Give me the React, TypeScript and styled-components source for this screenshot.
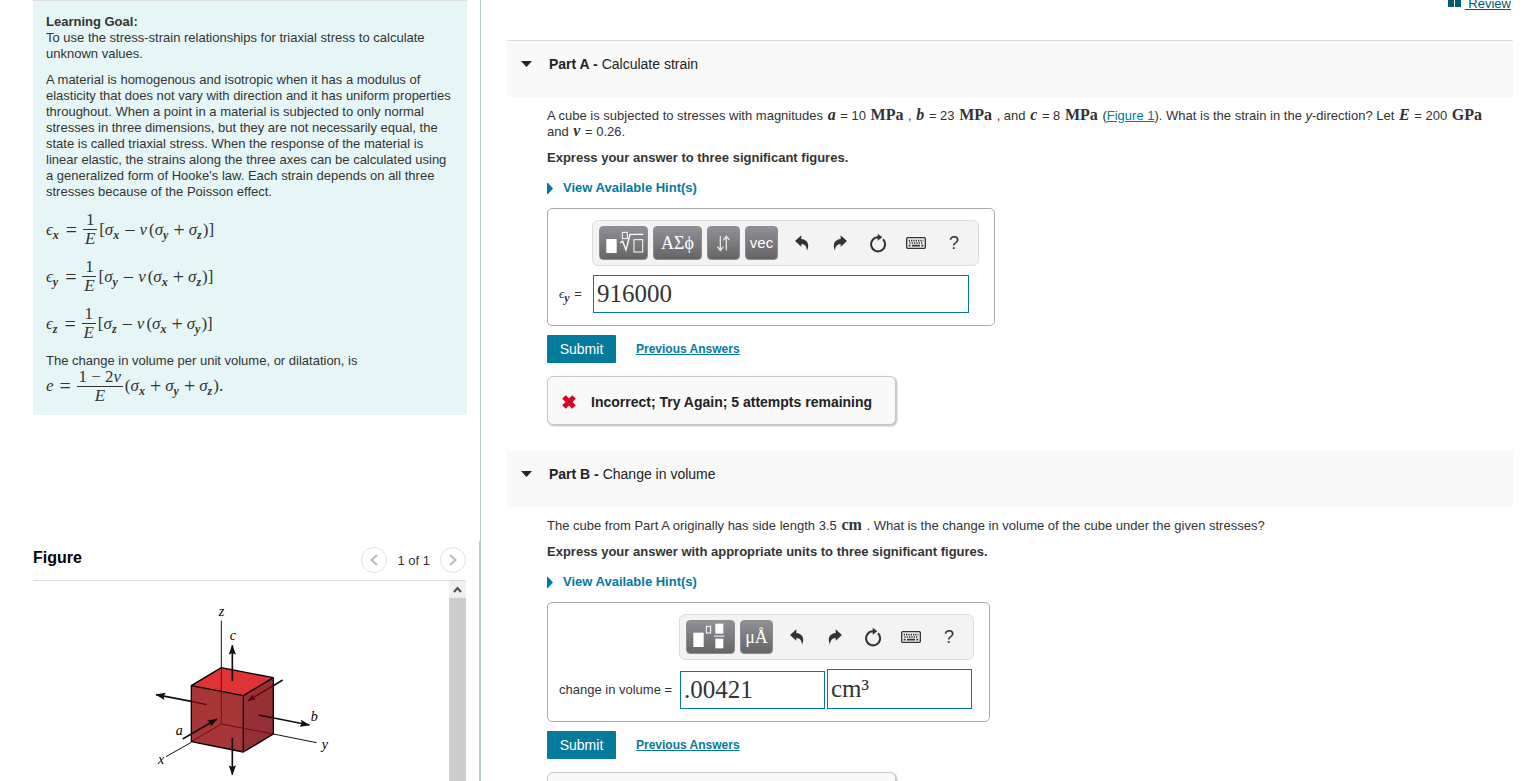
import React, { useState } from 'react';
import styled, { createGlobalStyle } from 'styled-components';

const sans = '"Liberation Sans", Arial, sans-serif';
const serif = '"Liberation Serif", "Times New Roman", serif';
const teal = '#047a9c';

const GlobalStyle = createGlobalStyle`
  * { box-sizing: border-box; }
  body {
    margin: 0;
    background: #fff;
    color: #333;
    font: 13px/16px ${sans};
  }
  p { margin: 0; }
`;

const Page = styled.div`
  display: flex;
  height: 100vh;
  overflow: hidden;
`;

/* ---------- left column ---------- */

const Sidebar = styled.aside`
  flex: 0 0 481px;
  display: flex;
  flex-direction: column;
`;

const IntroPane = styled.div`
  flex: 0 0 541px;
  padding: 0 13px 0 33px;
  border-right: 1px solid #b8cbdf;
`;

const Intro = styled.section`
  padding: 13px 12px 12px 13px;
  border-top: 1px solid #ddd;
  background: #e6f6f7;
  white-space: nowrap;
`;

const Paragraph = styled.p`
  margin-bottom: 10px;
`;

const EquationList = styled.div`
  margin: -4px 0 6px;
`;

const Equation = styled.div<{ $height: number }>`
  display: flex;
  align-items: center;
  height: ${p => p.$height}px;
  font: 17px/20px ${serif};
`;

const Var = styled.i<{ $spaced?: boolean }>`
  margin-right: ${p => (p.$spaced ? 2 : 0)}px;
  font-family: ${serif};
`;

const Sub = styled.sub`
  margin-right: 1px;
  font-size: 12px;
  line-height: 0;
  font-weight: bold;
  vertical-align: -4px;
`;

const Op = styled.span<{ $relation?: boolean }>`
  margin: 0 ${p => (p.$relation ? 6 : 4)}px;
  font-size: 20px;
`;

const Fraction = styled.span<{ $width: number }>`
  display: flex;
  flex-direction: column;
  align-items: center;
  width: ${p => p.$width}px;
  margin-right: 2px;
  line-height: 18px;
`;

const Numerator = styled.span`
  width: 100%;
  border-bottom: 1px solid #333;
  text-align: center;
`;

const FigurePane = styled.section`
  flex: 1;
  min-height: 0;
  display: flex;
  flex-direction: column;
  padding: 0 13px 0 33px;
  border-right: 2px solid #b8cbdf;
`;

const FigureHeader = styled.header`
  flex: 0 0 40px;
  display: flex;
  align-items: center;
  padding-bottom: 2px;
  border-bottom: 1px solid #ddd;
`;

const FigureTitle = styled.h2`
  flex: 1;
  margin: 0 0 4px;
  font-size: 16px;
  line-height: 20px;
  color: #000;
`;

const PageCount = styled.span`
  margin: 2px 10px 0;
`;

const RoundButton = styled.button`
  display: grid;
  place-items: center;
  width: 26px;
  height: 26px;
  padding: 0;
  border: 1px solid #e0e0e0;
  border-radius: 50%;
  background: #fff;
`;

const FigureBody = styled.div`
  flex: 1;
  min-height: 0;
  display: flex;
  justify-content: space-between;
`;

const Drawing = styled.svg`
  margin: 9px 0 0 107px;
`;

const Scrollbar = styled.div`
  display: flex;
  flex-direction: column;
  width: 17px;
  background: #cdcdcd;
`;

const ScrollUp = styled.button`
  display: grid;
  place-items: center;
  height: 17px;
  padding: 0;
  border: 0;
  background: #f0f0f0;
`;

/* ---------- right column ---------- */

const Main = styled.main`
  flex: 1;
  min-width: 0;
  padding: 0 10px 0 26px;
`;

const TopBar = styled.div`
  display: flex;
  justify-content: flex-end;
  align-items: flex-start;
  gap: 4px;
  height: 44px;
  margin-top: -4px;
  padding-right: 2px;
`;

const ReviewLink = styled.a`
  color: #005a70;
  white-space: pre;
`;

const PartHeader = styled.header<{ $first?: boolean }>`
  display: flex;
  align-items: center;
  height: ${p => (p.$first ? 57 : 56)}px;
  padding: 0 0 11px 14px;
  border-top: ${p => (p.$first ? '1px solid #ddd' : '0')};
  background: #f9f9f9;
  color: #222;
`;

const PartTitle = styled.h3`
  margin: 0 0 0 17px;
  font-size: 14px;
  font-weight: normal;
`;

const PartBody = styled.div`
  padding: 11px 0 26px 40px;
`;

const Instruction = styled.p`
  margin: 10px 0 14px;
  font-weight: bold;
`;

const Unit = styled.b`
  margin: 0 1px;
  font: bold 16px/0 ${serif};
`;

const Symbol = styled.i`
  margin: 0 1px;
  font: italic bold 16px/0 ${serif};
`;

const FigureLink = styled.a`
  color: ${teal};
`;

const HintButton = styled.button`
  display: flex;
  align-items: center;
  gap: 10px;
  padding: 0;
  margin-bottom: 12px;
  border: 0;
  background: none;
  color: ${teal};
  font: bold 13px/16px ${sans};
`;

const AnswerBox = styled.div`
  display: flex;
  width: fit-content;
  padding: 11px 15px 12px 11px;
  border: 1px solid #aaa;
  border-radius: 5px;
`;

const AnswerLabel = styled.label<{ $width: number }>`
  align-self: flex-end;
  width: ${p => p.$width}px;
  padding-bottom: 11px;
  white-space: nowrap;
`;

const Editor = styled.div`
  display: flex;
  flex-direction: column;
  gap: 9px;
`;

const Toolbar = styled.div`
  display: flex;
  align-items: center;
  height: 46px;
  padding: 0 5px 0 6px;
  border: 1px solid #ddd;
  border-radius: 6px;
  background: #f3f3f3;
`;

const Palette = styled.div`
  display: flex;
  gap: 5px;
  margin-right: 5px;
`;

const PaletteButton = styled.button<{ $wide?: boolean; $font?: string }>`
  display: grid;
  place-items: center;
  width: ${p => (p.$wide ? 49 : 33)}px;
  height: 34px;
  padding: 0;
  border: 1px solid #8d8d91;
  border-radius: 4px;
  background: linear-gradient(#918f97, #656565);
  color: #fff;
  font: ${p => p.$font || `15px/18px ${sans}`};
`;

const ToolButton = styled.button`
  display: grid;
  place-items: center;
  width: 38px;
  height: 34px;
  padding: 0;
  border: 0;
  background: none;
  color: #333;
  font: 18px/20px ${sans};
`;

const Fields = styled.div`
  display: flex;
  align-items: flex-end;
  gap: 2px;
  padding: 0 1px;
`;

const AnswerInput = styled.input<{ $width: number; $height: number }>`
  width: ${p => p.$width}px;
  height: ${p => p.$height}px;
  padding: 0 3px;
  border: 1px solid ${teal};
  border-radius: 0;
  background: #fff;
  color: #333;
  font: 25px/30px ${serif};
`;

const Actions = styled.div`
  display: flex;
  align-items: center;
  gap: 20px;
  margin: 9px 0 13px;
`;

const SubmitButton = styled.button`
  width: 69px;
  height: 28px;
  padding: 0;
  border: 0;
  border-radius: 1px;
  background: ${teal};
  color: #fff;
  font: 14px/16px ${sans};
`;

const PreviousLink = styled.a`
  color: ${teal};
  font-size: 12px;
  font-weight: bold;
`;

const Feedback = styled.div`
  display: flex;
  align-items: center;
  gap: 15px;
  width: 349px;
  height: 49px;
  padding: 2px 14px 0;
  border: 1px solid #c7c7c7;
  border-radius: 6px;
  background: #f9f9f9;
  box-shadow: 1px 1px 2px rgba(0, 0, 0, 0.3);
  color: #222;
  font-size: 14px;
  font-weight: bold;
  white-space: nowrap;
`;

/* ---------- icons ---------- */

const CaretDown = () => (
  <svg width="11" height="6" viewBox="0 0 11 6"><path d="M0 0h11L5.500 6z" fill="#222" /></svg>
);

const CaretRight = () => (
  <svg width="6" height="11" viewBox="0 0 6 11"><path d="M0 0h1l5 5.500L1 11H0z" fill={teal} /></svg>
);

const Chevron = ({ right }: { right?: boolean }) => (
  <svg width="8" height="12" viewBox="0 0 8 12" fill="none" stroke="#bbb" strokeWidth="2">
    <path d={right ? 'M1 1l5.500 5L1 11' : 'M7 1L1.500 6 7 11'} />
  </svg>
);

const arrowPath = 'M0 18 19 1V12C34 13 46 25 36 47 35 34 30 28 19 27V35Z';

const UndoIcon = () => (
  <svg width="14" height="16" viewBox="0 0 42 48" fill="currentColor">
    <path d={arrowPath} />
  </svg>
);

const RedoIcon = () => (
  <svg width="14" height="16" viewBox="0 0 42 48" fill="currentColor">
    <path d={arrowPath} transform="matrix(-1 0 0 1 42 0)" />
  </svg>
);

const ResetIcon = () => (
  <svg width="18" height="20" viewBox="0 0 54 60">
    <path d="M42 19A21 21 0 1 1 27 13" fill="none" stroke="currentColor" strokeWidth="6" />
    <path d="M26 2l14 11-14 10z" fill="currentColor" />
  </svg>
);

const KeyboardIcon = () => (
  <svg width="20" height="12" viewBox="0 0 60 36" fill="none" stroke="currentColor">
    <rect x="2" y="2" width="56" height="32" rx="3" strokeWidth="4" />
    <path d="M8 11h44M10 18h42" strokeWidth="5" strokeDasharray="4 3" />
    <path d="M8 26h6M18 26h24M46 26h6" strokeWidth="5" />
  </svg>
);

const RootIcon = () => (
  <svg width="47" height="32" viewBox="3 3 141 96" fill="none" stroke="#fff" strokeWidth="3">
    <rect x="22" y="39" width="31" height="42" fill="#fff" stroke="none" />
    <rect x="70" y="19" width="15" height="19" />
    <path d="M64 50l7-4 10 26L93 25h40" strokeWidth="4" />
    <rect x="105" y="41" width="26" height="37" />
  </svg>
);

const TemplateIcon = () => (
  <svg width="47" height="32" viewBox="3 3 141 96" fill="#fff">
    <rect x="22" y="38" width="31" height="43" />
    <rect x="61" y="19" width="13" height="20" fill="none" stroke="#fff" strokeWidth="3" />
    <rect x="88" y="11" width="24" height="30" />
    <rect x="84" y="47" width="31" height="3" />
    <rect x="88" y="56" width="24" height="29" />
  </svg>
);

const ArrowsIcon = () => (
  <svg width="31" height="32" viewBox="3 3 93 96" fill="none" stroke="#e4e4e4" strokeWidth="4">
    <path d="M40 30v42M31 62l9 11 9-11M58 73V31M49 42l9-11 9 11" />
  </svg>
);

const BookIcon = () => (
  <svg width="13" height="11" viewBox="0 0 13 11" fill="#005a70">
    <path d="M0 0h6v11H0zM7 0h6v11H7z" />
  </svg>
);

const CrossIcon = () => (
  <svg width="14" height="14" viewBox="0 0 14 14">
    <path d="M2 2l10 10M12 2L2 12" stroke="#db0020" strokeWidth="5" />
  </svg>
);

/* ---------- pieces ---------- */

const Term = ({ base, sub }: { base: string; sub: string }) => (
  <span><Var>{base}</Var><Sub><i>{sub}</i></Sub></span>
);

const StrainEquation = ({ axis, others }: { axis: string; others: [string, string] }) => (
  <Equation $height={47}>
    <Term base="ϵ" sub={axis} />
    <Op $relation>=</Op>
    <Fraction $width={14}><Numerator>1</Numerator><Var>E</Var></Fraction>
    <span>[</span><Term base="σ" sub={axis} />
    <Op>−</Op>
    <Var $spaced>ν</Var><span>(</span><Term base="σ" sub={others[0]} />
    <Op>+</Op>
    <Term base="σ" sub={others[1]} /><span>)]</span>
  </Equation>
);

const EditTools = () => (
  <>
    <ToolButton aria-label="Undo"><UndoIcon /></ToolButton>
    <ToolButton aria-label="Redo"><RedoIcon /></ToolButton>
    <ToolButton aria-label="Reset"><ResetIcon /></ToolButton>
    <ToolButton aria-label="Keyboard shortcuts"><KeyboardIcon /></ToolButton>
    <ToolButton aria-label="Help">?</ToolButton>
  </>
);

const Hints = () => <HintButton><CaretRight />View Available Hint(s)</HintButton>;

const SubmitRow = () => (
  <Actions>
    <SubmitButton>Submit</SubmitButton>
    <PreviousLink href="#previous">Previous Answers</PreviousLink>
  </Actions>
);

const Result = () => (
  <Feedback><CrossIcon />Incorrect; Try Again; 5 attempts remaining</Feedback>
);

const CubeDrawing = () => (
  <Drawing width="220" height="191" viewBox="0 0 660 573" role="img" aria-label="Cube under triaxial stress">
    <defs>
      <marker id="head" viewBox="0 0 30 22" refX="28" refY="11" markerWidth="30" markerHeight="22" markerUnits="userSpaceOnUse" orient="auto">
        <path d="M0 0l30 11L0 22l5-11z" fill="#111" />
      </marker>
      <marker id="head-inner" viewBox="0 0 24 18" refX="22" refY="9" markerWidth="24" markerHeight="18" markerUnits="userSpaceOnUse" orient="auto">
        <path d="M0 0l24 9L0 18l4-9z" fill="#6b0000" />
      </marker>
    </defs>
    <path d="M244 92v142M154 457L78 500M400 432l130 26" stroke="#111" strokeWidth="3" fill="none" />
    <path d="M154 287l156 30v169l-156-31z" fill="#a83538" />
    <path d="M310 317l90-54v169l-90 54z" fill="#943036" />
    <path d="M154 287l90-54 156 30-90 54z" fill="#de3436" />
    <path d="M244 234v168M154 455l90-53 156 30" stroke="#6b0d10" strokeWidth="3" fill="none" />
    <path d="M154 287l156 30v169l-156-31zM310 317l90-54v169l-90 54M154 287l90-54 156 30" fill="none" stroke="#000" strokeWidth="4" strokeLinejoin="round" />
    <g stroke="#111" strokeWidth="5" fill="none">
      <path d="M277 273V166" markerEnd="url(#head)" />
      <path d="M277 444V554" markerEnd="url(#head)" />
      <path d="M356 375l152 30" markerEnd="url(#head)" />
      <path d="M128 447l103-60" markerEnd="url(#head)" />
      <path d="M154 334L48 314" markerEnd="url(#head)" />
      <path d="M428 270l-28 17" />
    </g>
    <path d="M200 344l-46-10" stroke="#6b0000" strokeWidth="4" />
    <path d="M400 287l-76 45" stroke="#6b0000" strokeWidth="4" markerEnd="url(#head-inner)" />
    <g fontFamily="Liberation Serif, serif" fontStyle="italic" fontSize="42" fill="#000">
      <text x="236" y="78">z</text>
      <text x="269" y="150">c</text>
      <text x="512" y="393">b</text>
      <text x="545" y="478">y</text>
      <text x="107" y="436">a</text>
      <text x="54" y="522">x</text>
    </g>
  </Drawing>
);

export default function App() {
  const [strain, setStrain] = useState('916000');
  const [volume, setVolume] = useState('.00421');
  const [unit, setUnit] = useState('cm³');

  return (
    <Page>
      <GlobalStyle />
      <Sidebar>
        <IntroPane>
          <Intro>
            <b>Learning Goal:</b>
            <Paragraph>
              To use the stress-strain relationships for triaxial stress to calculate<br />
              unknown values.
            </Paragraph>
            <Paragraph>
              A material is homogenous and isotropic when it has a modulus of<br />
              elasticity that does not vary with direction and it has uniform properties<br />
              throughout. When a point in a material is subjected to only normal<br />
              stresses in three dimensions, but they are not necessarily equal, the<br />
              state is called triaxial stress. When the response of the material is<br />
              linear elastic, the strains along the three axes can be calculated using<br />
              a generalized form of Hooke's law. Each strain depends on all three<br />
              stresses because of the Poisson effect.
            </Paragraph>
            <EquationList>
              <StrainEquation axis="x" others={['y', 'z']} />
              <StrainEquation axis="y" others={['x', 'z']} />
              <StrainEquation axis="z" others={['x', 'y']} />
            </EquationList>
            <p>The change in volume per unit volume, or dilatation, is</p>
            <Equation $height={34}>
              <Var>e</Var>
              <Op $relation>=</Op>
              <Fraction $width={46}>
                <Numerator>1 − 2<Var>ν</Var></Numerator>
                <Var>E</Var>
              </Fraction>
              <span>(</span><Term base="σ" sub="x" />
              <Op>+</Op>
              <Term base="σ" sub="y" />
              <Op>+</Op>
              <Term base="σ" sub="z" /><span>).</span>
            </Equation>
          </Intro>
        </IntroPane>
        <FigurePane>
          <FigureHeader>
            <FigureTitle>Figure</FigureTitle>
            <RoundButton aria-label="Previous figure"><Chevron /></RoundButton>
            <PageCount>1 of 1</PageCount>
            <RoundButton aria-label="Next figure"><Chevron right /></RoundButton>
          </FigureHeader>
          <FigureBody>
            <CubeDrawing />
            <Scrollbar>
              <ScrollUp aria-label="Scroll up">
                <svg width="9" height="7" viewBox="0 0 9 7"><path d="M1 6l3.500-4L8 6" fill="none" stroke="#505050" strokeWidth="2" /></svg>
              </ScrollUp>
            </Scrollbar>
          </FigureBody>
        </FigurePane>
      </Sidebar>

      <Main>
        <TopBar>
          <BookIcon />
          <ReviewLink href="#review"> Review</ReviewLink>
        </TopBar>

        <PartHeader $first>
          <CaretDown />
          <PartTitle><b>Part A - </b>Calculate strain</PartTitle>
        </PartHeader>
        <PartBody>
          <p>
            A cube is subjected to stresses with magnitudes <Symbol>a</Symbol> = 10 <Unit>MPa</Unit> , <Symbol>b</Symbol> = 23 <Unit>MPa</Unit> , and <Symbol>c</Symbol> = 8 <Unit>MPa</Unit> (<FigureLink href="#figure-1">Figure 1</FigureLink>). What is the strain in the <i>y</i>-direction? Let <Symbol>E</Symbol> = 200 <Unit>GPa</Unit><br />
            and <Symbol>ν</Symbol> = 0.26.
          </p>
          <Instruction>Express your answer to three significant figures.</Instruction>
          <Hints />
          <AnswerBox>
            <AnswerLabel htmlFor="strain" $width={33}><Var>ϵ</Var><Sub><Var>y</Var></Sub> =</AnswerLabel>
            <Editor>
              <Toolbar>
                <Palette>
                  <PaletteButton $wide aria-label="Templates"><RootIcon /></PaletteButton>
                  <PaletteButton $wide $font={`18px/20px ${serif}`}>ΑΣϕ</PaletteButton>
                  <PaletteButton aria-label="Arrows"><ArrowsIcon /></PaletteButton>
                  <PaletteButton>vec</PaletteButton>
                </Palette>
                <EditTools />
              </Toolbar>
              <Fields>
                <AnswerInput id="strain" $width={376} $height={38} value={strain} onChange={e => setStrain(e.target.value)} />
              </Fields>
            </Editor>
          </AnswerBox>
          <SubmitRow />
          <Result />
        </PartBody>

        <PartHeader>
          <CaretDown />
          <PartTitle><b>Part B - </b>Change in volume</PartTitle>
        </PartHeader>
        <PartBody>
          <p>
            The cube from Part A originally has side length 3.5 <Unit>cm</Unit> . What is the change in volume of the cube under the given stresses?
          </p>
          <Instruction>Express your answer with appropriate units to three significant figures.</Instruction>
          <Hints />
          <AnswerBox>
            <AnswerLabel htmlFor="volume" $width={120}>change in volume =</AnswerLabel>
            <Editor>
              <Toolbar>
                <Palette>
                  <PaletteButton $wide aria-label="Templates"><TemplateIcon /></PaletteButton>
                  <PaletteButton $font={`18px/20px ${serif}`}>μÅ</PaletteButton>
                </Palette>
                <EditTools />
              </Toolbar>
              <Fields>
                <AnswerInput id="volume" $width={145} $height={38} value={volume} onChange={e => setVolume(e.target.value)} />
                <AnswerInput aria-label="Units" $width={145} $height={40} value={unit} onChange={e => setUnit(e.target.value)} />
              </Fields>
            </Editor>
          </AnswerBox>
          <SubmitRow />
          <Result />
        </PartBody>
      </Main>
    </Page>
  );
}
